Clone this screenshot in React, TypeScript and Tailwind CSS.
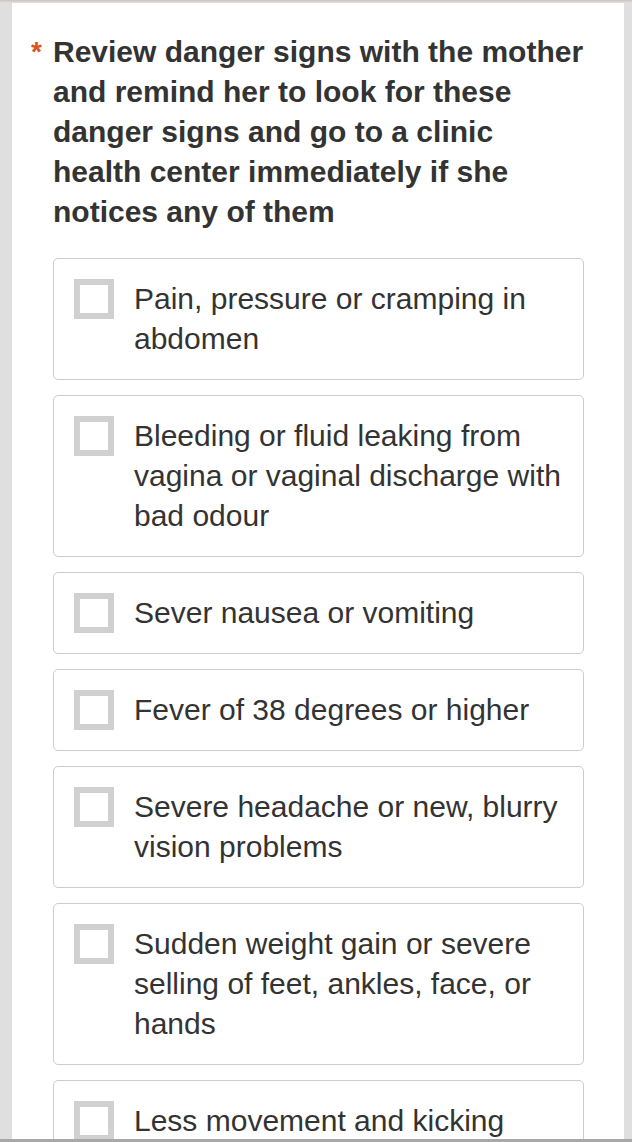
import React from 'react';

const SIGNS = [
  'Pain, pressure or cramping in abdomen',
  'Bleeding or fluid leaking from vagina or vaginal discharge with bad odour',
  'Sever nausea or vomiting',
  'Fever of 38 degrees or higher',
  'Severe headache or new, blurry vision problems',
  'Sudden weight gain or severe selling of feet, ankles, face, or hands',
  'Less movement and kicking from the baby',
];

const App: React.FC = () => {
  return (
    <div className="h-[1142px] w-[632px] overflow-hidden bg-[#dfdfdf] flex flex-col font-['Liberation_Sans'] text-[#333]">
      <div className="h-[3px] bg-gradient-to-b from-[#c8c4c0] to-[#e4e2e0] shrink-0" />
      <div className="flex-1 min-h-0 pl-[12px] pr-[8px] flex">
        <div className="flex-1 bg-white pt-[29px] pl-[18px] pr-[40px] overflow-hidden">
          <div className="flex">
            <span className="w-[23px] shrink-0 pl-[1px] text-[#d9541e] text-[28px] font-bold leading-[40px]">*</span>
            <h2 className="text-[30px] font-bold leading-[40px]">
              Review danger signs with the mother and remind her to look for these danger signs and go to a clinic health center immediately if she notices any of them
            </h2>
          </div>

          <div className="mt-[26px] ml-[23px] flex flex-col gap-[15px]">
            {SIGNS.map((s, i) => (
              <label
                key={i}
                className="flex items-start border border-[#ccc] rounded-[5px] px-[20px] py-[20px] bg-white"
              >
                <span className="w-[40px] h-[40px] shrink-0 border-[6px] border-[#d0d0d0] bg-white" />
                <span className="ml-[20px] text-[30px] leading-[40px]">{s}</span>
              </label>
            ))}
          </div>
        </div>
      </div>
      <div className="h-[3px] bg-[#a8a8a8] shrink-0" />
    </div>
  );
};

export default App;
